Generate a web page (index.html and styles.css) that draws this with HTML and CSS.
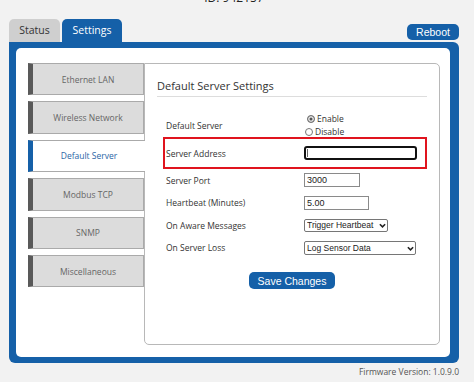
FILE: index.html
```html
<!DOCTYPE html>
<html lang="en">
<head>
  <meta charset="UTF-8">
  <meta name="viewport" content="width=device-width, initial-scale=1.0">
  <title>Settings - Default Server</title>
  <link rel="stylesheet" href="styles.css">
</head>
<body>
  <div class="page">
    <div class="device-id">ID: 942157</div>

    <div class="tabbar">
      <div class="tab">Status</div>
      <div class="tab active">Settings</div>
      <button class="btn reboot">Reboot</button>
    </div>

    <div class="frame">
      <div class="frame-inner">
        <div class="menu">
          <div class="menu-item">Ethernet LAN</div>
          <div class="menu-item">Wireless Network</div>
          <div class="menu-item active">Default Server</div>
          <div class="menu-item">Modbus TCP</div>
          <div class="menu-item">SNMP</div>
          <div class="menu-item">Miscellaneous</div>
        </div>

        <div class="panel">
          <h2>Default Server Settings</h2>
          <form class="form">
            <div class="row radios">
              <span class="label">Default Server</span>
              <div class="radio-group">
                <label><input type="radio" name="srv" checked> Enable</label>
                <label class="off"><input type="radio" name="srv"> Disable</label>
              </div>
            </div>
            <div class="row marked">
              <span class="label">Server Address</span>
              <input type="text" class="field address">
            </div>
            <div class="row">
              <span class="label">Server Port</span>
              <input type="text" class="field port" value="3000">
            </div>
            <div class="row">
              <span class="label">Heartbeat (Minutes)</span>
              <input type="text" class="field beat" value="5.00">
            </div>
            <div class="row">
              <span class="label">On Aware Messages</span>
              <span class="pick aware">
                <select>
                  <option>Trigger Heartbeat</option>
                </select>
                <svg class="chev" viewBox="0 0 8 5"><path d="M1 1L4 4L7 1"/></svg>
              </span>
            </div>
            <div class="row">
              <span class="label">On Server Loss</span>
              <span class="pick loss">
                <select>
                  <option>Log Sensor Data</option>
                </select>
                <svg class="chev" viewBox="0 0 8 5"><path d="M1 1L4 4L7 1"/></svg>
              </span>
            </div>
            <button type="button" class="btn save">Save Changes</button>
          </form>
        </div>
      </div>
    </div>

    <div class="firmware">Firmware Version: 1.0.9.0</div>
  </div>
</body>
</html>
```

FILE: styles.css
```css
body {
  margin: 0;
  background: #f2f2f2;
  font-family: "Open Sans", "Noto Sans", sans-serif;
  color: #333;
}
.page {
  padding: 0 15px 0 9px;
}
.device-id {
  margin-top: -8px;
  font-size: 12px;
  line-height: 12px;
  text-align: center;
  color: #222;
}
.tabbar {
  display: flex;
  align-items: flex-end;
  gap: 2px;
  margin-top: 15px;
}
.tab {
  height: 23px;
  line-height: 23px;
  width: 51px;
  text-align: center;
  font-size: 10.5px;
  background: #cfcfcf;
  color: #333;
  border-radius: 5px 5px 0 0;
}
.tab.active {
  width: 60px;
  background: #1560a8;
  color: #fff;
}
.btn {
  border: none;
  background: #1560a8;
  color: #fff;
  font-family: "Liberation Sans", Arial, sans-serif;
  font-size: 10.5px;
  border-radius: 5px;
  padding: 0;
  cursor: pointer;
}
.reboot {
  margin-left: auto;
  margin-bottom: 2px;
  width: 52px;
  height: 16px;
}
.frame {
  background: #1560a8;
  padding: 6px 9px 6px 7px;
  border-radius: 0 6px 6px 6px;
}
.frame-inner {
  display: flex;
  align-items: flex-start;
  height: 309px;
  box-sizing: border-box;
  padding: 15px 10px 12px 12px;
  background: #fff;
  border-radius: 5px;
}
.menu {
  width: 116px;
  flex: none;
}
.menu-item {
  box-sizing: border-box;
  height: 32.4px;
  margin-bottom: 6px;
  display: flex;
  align-items: center;
  justify-content: center;
  border: 1px solid #aaa;
  border-left: 5px solid #595959;
  background: #dcdcdc;
  color: #666;
  font-size: 8.5px;
}
.menu-item.active {
  position: relative;
  z-index: 1;
  margin-right: -1px;
  border-right: none;
  border-left-color: #1560a8;
  background: #fff;
  color: #2c66a6;
}
.panel {
  flex: 1;
  height: 282px;
  box-sizing: border-box;
  border: 1px solid #b8b8b8;
  border-radius: 0 5px 5px 5px;
}
.panel h2 {
  margin: 0 12px;
  padding: 14px 0 2px;
  font-size: 11px;
  font-weight: normal;
  line-height: 16px;
  color: #333;
  border-bottom: 1px solid #ddd;
}
.form {
  margin: 16px 0 0;
}
.row {
  display: flex;
  align-items: center;
  height: 22.5px;
  box-sizing: border-box;
  margin: 0 12px 0 18px;
  padding-left: 1px;
  border: 2px solid transparent;
  font-size: 8.5px;
}
.row.radios {
  height: 24px;
}
.row.marked {
  height: 32px;
  border-color: #e0141e;
}
.label {
  width: 138px;
  flex: none;
}
.radio-group label {
  display: flex;
  align-items: center;
  line-height: 13px;
}
.radio-group input {
  appearance: none;
  width: 8px;
  height: 8px;
  margin: 0 2px 0 3px;
  border: 1px solid #777;
  border-radius: 50%;
  background: #fff;
}
.radio-group input:checked {
  background: #555;
  box-shadow: inset 0 0 0 1.5px #e6e6e6;
}
.radio-group .off input {
  margin-left: 1px;
}
.field {
  box-sizing: border-box;
  height: 14px;
  padding: 0 2px;
  border: 1px solid #8a8a8a;
  font-family: "Liberation Sans", Arial, sans-serif;
  font-size: 9px;
  color: #222;
  background: #fff;
}
.address {
  width: 113px;
  border: 2px solid #111;
  border-radius: 3px;
  background: linear-gradient(#666, #666) no-repeat 1px 1px / 1px 8px, #fff;
}
.port {
  width: 56px;
}
.beat {
  width: 65px;
}
.pick {
  position: relative;
  display: inline-block;
  height: 13.5px;
}
.pick select {
  appearance: none;
  box-sizing: border-box;
  width: 100%;
  height: 100%;
  padding: 0 9px 0 2px;
  border: 1px solid #767676;
  border-radius: 2px;
  font-family: "Liberation Sans", Arial, sans-serif;
  font-size: 8.5px;
  color: #222;
  background: #fff;
}
.chev {
  position: absolute;
  right: 2.5px;
  top: 4.5px;
  width: 7px;
  height: 5px;
  pointer-events: none;
}
.chev path {
  fill: none;
  stroke: #222;
  stroke-width: 1.8;
}
.aware {
  width: 84px;
}
.loss {
  width: 112px;
}
.save {
  display: block;
  margin: 13px auto 0;
  width: 86px;
  height: 17px;
}
.firmware {
  margin-top: 3px;
  text-align: right;
  font-size: 8.5px;
  line-height: 12px;
  color: #555;
}
```
